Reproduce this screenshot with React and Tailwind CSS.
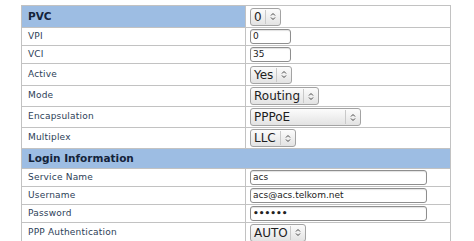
import React from "react";

function Chevrons() {
  return (
    <svg width="6" height="9" viewBox="0 0 6 9" className="block">
      <polyline points="1,3.5 3,1.5 5,3.5" fill="none" stroke="#444" strokeWidth="1" />
      <polyline points="1,5.5 3,7.5 5,5.5" fill="none" stroke="#444" strokeWidth="1" />
    </svg>
  );
}

function Select({ label, wClass }) {
  return (
    <div
      className={`flex h-[18px] items-center rounded-[3px] border border-[#a3a3a3] bg-gradient-to-b from-[#fcfcfc] to-[#e3e3e3] pl-[3px] text-[12px] leading-none text-[#1e1e1e] ${wClass}`}
    >
      <span className="flex-1 whitespace-nowrap">{label}</span>
      <span className="flex h-[14px] items-center border-l border-[#c9c9c9] px-[4px]">
        <Chevrons />
      </span>
    </div>
  );
}

function TextInput({ value, wClass, bold }) {
  return (
    <div
      className={`flex h-[15px] items-center rounded-[3px] border border-[#8e8e8e] bg-white px-[2px] text-[9px] leading-none text-[#222] shadow-[inset_0_1px_1px_rgba(0,0,0,0.12)] ${wClass} ${bold ? "font-bold" : ""}`}
    >
      {value}
    </div>
  );
}

function Row({ label, hClass, children }) {
  return (
    <div className={`flex border-b border-[#c2c2c2] ${hClass}`}>
      <div className="flex w-[224px] shrink-0 items-center border-r border-[#c2c2c2] pl-[6px] text-[9px] tracking-[0.2px] text-[#2c3e57]">
        {label}
      </div>
      <div className="flex flex-1 items-center pl-[4px]">{children}</div>
    </div>
  );
}

export default function App() {
  return (
    <div className="h-[241px] w-[474px] overflow-hidden bg-white pt-[5px] pl-[21px]" style={{ fontFamily: '"DejaVu Sans", Verdana, sans-serif' }}>
      <div className="w-[430px] border-x border-t border-[#c2c2c2]">
        <div className="flex h-[22px] border-b border-[#c2c2c2]">
          <div className="flex w-[224px] shrink-0 items-center border-r border-[#c2c2c2] bg-[#9dbde3] pl-[6px] text-[10.5px] font-bold text-[#14233a]">
            PVC
          </div>
          <div className="flex flex-1 items-center pl-[4px]">
            <Select label="0" wClass="w-[31px]" />
          </div>
        </div>
        <Row label="VPI" hClass="h-[18px]">
          <TextInput value="0" wClass="w-[41px]" />
        </Row>
        <Row label="VCI" hClass="h-[18px]">
          <TextInput value="35" wClass="w-[41px]" />
        </Row>
        <Row label="Active" hClass="h-[22px]">
          <Select label="Yes" wClass="w-[42px]" />
        </Row>
        <Row label="Mode" hClass="h-[21px]">
          <Select label="Routing" wClass="w-[69px]" />
        </Row>
        <Row label="Encapsulation" hClass="h-[21px]">
          <Select label="PPPoE" wClass="w-[111px]" />
        </Row>
        <Row label="Multiplex" hClass="h-[21px]">
          <Select label="LLC" wClass="w-[46px]" />
        </Row>
        <div className="flex h-[20px] items-center border-b border-[#c2c2c2] bg-[#9dbde3] pl-[6px] text-[10.5px] font-bold text-[#14233a]">
          Login Information
        </div>
        <Row label="Service Name" hClass="h-[18px]">
          <TextInput value="acs" wClass="w-[177px]" />
        </Row>
        <Row label="Username" hClass="h-[18px]">
          <TextInput value="acs@acs.telkom.net" wClass="w-[177px]" />
        </Row>
        <Row label="Password" hClass="h-[18px]">
          <TextInput value="••••••" wClass="w-[177px]" bold />
        </Row>
        <Row label="PPP Authentication" hClass="h-[20px]">
          <Select label="AUTO" wClass="w-[56px]" />
        </Row>
      </div>
    </div>
  );
}
